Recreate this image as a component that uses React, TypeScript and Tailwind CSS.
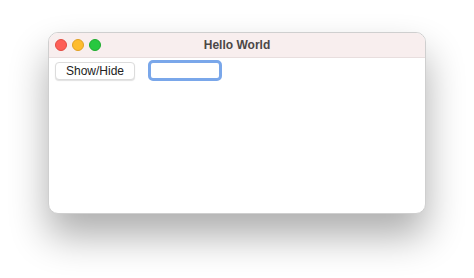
export default function App() {
  return (
    <div className="w-[474px] h-[278px] bg-white pl-[48px] pt-[32px] font-['Helvetica','Liberation_Sans',sans-serif]">
      <div className="w-[378px] h-[182px] rounded-[10px] bg-white border border-[#cfcfcf] shadow-[0_22px_38px_rgba(0,0,0,0.32)] overflow-hidden flex flex-col">
        {/* title bar */}
        <div className="relative h-[25px] bg-[#f8eeee] border-b border-[#e8dede] flex items-center pl-[6px] gap-[5px]">
          <span className="w-[12px] h-[12px] rounded-full bg-[#fe5f57] border border-[#e24b41]" />
          <span className="w-[12px] h-[12px] rounded-full bg-[#febc2e] border border-[#dfa023]" />
          <span className="w-[12px] h-[12px] rounded-full bg-[#28c840] border border-[#1dab2d]" />
          <div className="absolute inset-0 flex items-center justify-center text-[12px] font-bold text-[#4b4747]">
            Hello World
          </div>
        </div>
        {/* content */}
        <div className="flex items-start pl-[6px] pt-[2px]">
          <button className="mt-[2px] w-[80px] h-[18px] rounded-[4px] bg-white border border-[#dcdcdc] shadow-[0_1px_1px_rgba(0,0,0,0.12)] text-[12px] leading-none text-[#222]">
            Show/Hide
          </button>
          <input className="ml-[13px] w-[74px] h-[21px] rounded-[5px] border-[3px] border-[#7aa7ea] bg-white outline-none" />
        </div>
      </div>
    </div>
  );
}
